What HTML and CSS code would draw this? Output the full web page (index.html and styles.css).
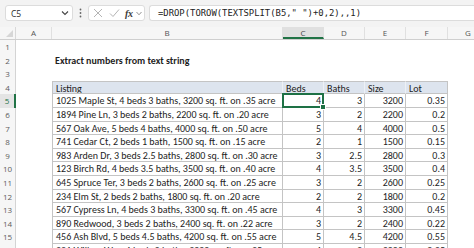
FILE: index.html
```html
<!DOCTYPE html>
<html>
<head>
<meta charset="utf-8">
<link rel="stylesheet" href="styles.css">
</head>
<body>
<div class="app">
  <div class="fbar">
    <div class="namebox">
      <span class="nb-text">C5</span>
      <svg class="chev" width="8" height="6" viewBox="0 0 8 6"><polyline points="1,1.5 4,4.5 7,1.5" fill="none" stroke="#444" stroke-width="1.1"/></svg>
    </div>
    <div class="vdots">
      <svg width="3" height="10" viewBox="0 0 3 10"><circle cx="1.5" cy="1.5" r="0.9" fill="#666"/><circle cx="1.5" cy="5" r="0.9" fill="#666"/><circle cx="1.5" cy="8.5" r="0.9" fill="#666"/></svg>
    </div>
    <div class="fxbox">
      <svg class="ico-x" width="10" height="10" viewBox="0 0 10 10"><path d="M1 1 L9 9 M9 1 L1 9" stroke="#b4b4b4" stroke-width="1" fill="none"/></svg>
      <svg class="ico-ok" width="11" height="10" viewBox="0 0 11 10"><polyline points="1,5.5 4,8.5 10,1.5" stroke="#b4b4b4" stroke-width="1" fill="none"/></svg>
      <span class="fx">fx</span>
      <svg class="chev2" width="6" height="5" viewBox="0 0 6 5"><polyline points="0.5,1 3,3.8 5.5,1" fill="none" stroke="#888" stroke-width="0.9"/></svg>
    </div>
    <div class="formula">=DROP(TOROW(TEXTSPLIT(B5," ")+0,2),,1)</div>
  </div>

  <div class="sheet">
    <div class="row colhdr">
      <div class="corner"><svg width="7" height="7" viewBox="0 0 7 7"><polygon points="7,0 7,7 0,7" fill="#d6d6d6"/></svg></div>
      <div class="ch">A</div>
      <div class="ch">B</div>
      <div class="ch ch-sel">C</div>
      <div class="ch">D</div>
      <div class="ch">E</div>
      <div class="ch">F</div>
      <div class="ch">G</div>
    </div>

    <div class="row"><div class="rh">1</div><div></div><div></div><div></div><div></div><div></div><div></div><div></div></div>
    <div class="row"><div class="rh">2</div><div></div><div class="title">Extract numbers from text string</div><div></div><div></div><div></div><div></div><div></div></div>
    <div class="row"><div class="rh">3</div><div></div><div></div><div></div><div></div><div></div><div></div><div></div></div>

    <div class="row"><div class="rh">4</div><div></div>
      <div class="t th first">Listing</div><div class="t th">Beds</div><div class="t th">Baths</div><div class="t th">Size</div><div class="t th">Lot</div><div></div></div>

    <div class="row"><div class="rh rh-sel">5</div><div></div>
      <div class="t first">1025 Maple St, 4 beds 3 baths, 3200 sq. ft. on .35 acre</div><div class="t num sel">4</div><div class="t num">3</div><div class="t num">3200</div><div class="t num">0.35</div><div></div></div>
    <div class="row"><div class="rh">6</div><div></div>
      <div class="t first">1894 Pine Ln, 3 beds 2 baths, 2200 sq. ft. on .20 acre</div><div class="t num">3</div><div class="t num">2</div><div class="t num">2200</div><div class="t num">0.2</div><div></div></div>
    <div class="row"><div class="rh">7</div><div></div>
      <div class="t first">567 Oak Ave, 5 beds 4 baths, 4000 sq. ft. on .50 acre</div><div class="t num">5</div><div class="t num">4</div><div class="t num">4000</div><div class="t num">0.5</div><div></div></div>
    <div class="row"><div class="rh">8</div><div></div>
      <div class="t first">741 Cedar Ct, 2 beds 1 bath, 1500 sq. ft. on .15 acre</div><div class="t num">2</div><div class="t num">1</div><div class="t num">1500</div><div class="t num">0.15</div><div></div></div>
    <div class="row"><div class="rh">9</div><div></div>
      <div class="t first">983 Arden Dr, 3 beds 2.5 baths, 2800 sq. ft. on .30 acre</div><div class="t num">3</div><div class="t num">2.5</div><div class="t num">2800</div><div class="t num">0.3</div><div></div></div>
    <div class="row"><div class="rh">10</div><div></div>
      <div class="t first">123 Birch Rd, 4 beds 3.5 baths, 3500 sq. ft. on .40 acre</div><div class="t num">4</div><div class="t num">3.5</div><div class="t num">3500</div><div class="t num">0.4</div><div></div></div>
    <div class="row"><div class="rh">11</div><div></div>
      <div class="t first">645 Spruce Ter, 3 beds 2 baths, 2600 sq. ft. on .25 acre</div><div class="t num">3</div><div class="t num">2</div><div class="t num">2600</div><div class="t num">0.25</div><div></div></div>
    <div class="row"><div class="rh">12</div><div></div>
      <div class="t first">234 Elm St, 2 beds 2 baths, 1800 sq. ft. on .20 acre</div><div class="t num">2</div><div class="t num">2</div><div class="t num">1800</div><div class="t num">0.2</div><div></div></div>
    <div class="row"><div class="rh">13</div><div></div>
      <div class="t first">567 Cypress Ln, 4 beds 3 baths, 3300 sq. ft. on .45 acre</div><div class="t num">4</div><div class="t num">3</div><div class="t num">3300</div><div class="t num">0.45</div><div></div></div>
    <div class="row"><div class="rh">14</div><div></div>
      <div class="t first">890 Redwood, 3 beds 2 baths, 2400 sq. ft. on .22 acre</div><div class="t num">3</div><div class="t num">2</div><div class="t num">2400</div><div class="t num">0.22</div><div></div></div>
    <div class="row"><div class="rh">15</div><div></div>
      <div class="t first">456 Ash Blvd, 5 beds 4.5 baths, 4200 sq. ft. on .55 acre</div><div class="t num">5</div><div class="t num">4.5</div><div class="t num">4200</div><div class="t num">0.55</div><div></div></div>
    <div class="row"><div class="rh">16</div><div></div>
      <div class="t first">321 Willow Way, 4 beds 3 baths, 3000 sq. ft. on .35 acre</div><div class="t num">4</div><div class="t num">3</div><div class="t num">3000</div><div class="t num">0.35</div><div></div></div>
  </div>
</div>
</body>
</html>
```
FILE: styles.css
```css
html, body {
  margin: 0;
  padding: 0;
  background: #ffffff;
  overflow: hidden;
}

.app {
  width: 474px;
  height: 248px;
  overflow: hidden;
  font-family: Carlito, Calibri, Lato, sans-serif;
  color: #1f1f1f;
}

/* ---------- formula bar ---------- */
.fbar {
  height: 27px;
  box-sizing: border-box;
  background: #f3f3f3;
  display: flex;
  align-items: flex-start;
  padding: 5px 0 0 5px;
}

.namebox {
  width: 68px;
  height: 16px;
  box-sizing: border-box;
  background: #fff;
  border: 1px solid #dcdcdc;
  border-radius: 3px;
  display: flex;
  align-items: center;
  justify-content: space-between;
  padding: 0 3px 0 5px;
}

.nb-text {
  font-family: "Open Sans", Lato, sans-serif;
  font-size: 8.5px;
  color: #2a2a2a;
}

.vdots {
  width: 15px;
  height: 16px;
  display: flex;
  align-items: center;
  justify-content: center;
}

.fxbox {
  width: 57px;
  height: 16px;
  box-sizing: border-box;
  background: #fff;
  border: 1px solid #dcdcdc;
  border-radius: 3px;
  display: flex;
  align-items: center;
  padding: 0 2px 0 4px;
  gap: 0;
}

.ico-x { margin-right: 6px; }
.ico-ok { margin-right: 5px; }

.fx {
  font-family: "Liberation Serif", serif;
  font-style: italic;
  font-weight: bold;
  font-size: 10px;
  color: #3a3a3a;
  margin-right: 3px;
  letter-spacing: -0.3px;
}

.formula {
  margin-left: 4px;
  flex: 1;
  height: 16px;
  box-sizing: border-box;
  background: #fff;
  border: 1px solid #dcdcdc;
  border-right: none;
  border-radius: 3px 0 0 3px;
  padding-left: 8px;
  font-family: "DejaVu Sans Mono", monospace;
  font-size: 8.9px;
  line-height: 14px;
  color: #222;
  white-space: nowrap;
}

/* ---------- sheet ---------- */
.sheet {
  display: flex;
  flex-direction: column;
}

.row {
  display: grid;
  grid-template-columns: 16px 36px 231px 41px 41px 41px 42px 41px;
  height: 13.6px;
  font-size: 10px;
  line-height: 13px;
}

.row > div {
  box-sizing: border-box;
  white-space: nowrap;
  overflow: hidden;
}

.colhdr {
  height: 13px;
  background: #f6f6f6;
  border-bottom: 1px solid #cfcfcf;
  box-sizing: border-box;
}

.corner {
  display: flex;
  align-items: flex-end;
  justify-content: flex-end;
  padding: 0 2px 2px 0;
  border-right: 1px solid #d8d8d8;
}

.ch {
  text-align: center;
  font-family: "Open Sans", Lato, sans-serif;
  font-size: 8px;
  line-height: 12px;
  color: #555;
  border-right: 1px solid #e0e0e0;
}

.ch-sel {
  background: #e0e0e0;
  border-bottom: 2px solid #217346;
  color: #444;
}

.rh {
  background: #f6f6f6;
  border-right: 1px solid #d4d4d4;
  text-align: center;
  font-family: "Open Sans", Lato, sans-serif;
  font-size: 8px;
  line-height: 13.6px;
  color: #5c5c5c;
}

.rh-sel {
  background: #e4e4e4;
  border-right: 2px solid #217346;
  color: #217346;
}

.title {
  font-weight: bold;
  padding-left: 3px;
  font-size: 10px;
  overflow: visible !important;
}

.t {
  border-right: 1px solid #c4c4c4;
  border-bottom: 1px solid #c4c4c4;
  padding: 0 3px;
  color: #1d1d1d;
}

.t.first {
  border-left: 1px solid #c4c4c4;
}

.th {
  background: #dde4ee;
  border-top: 1px solid #c4c4c4;
  border-right-color: #eef1f5;
}

.th:last-child, .th:nth-child(7) {
  border-right-color: #c4c4c4;
}

.num {
  text-align: right;
  padding-right: 2px;
}

.sel {
  position: relative;
  overflow: visible !important;
}

.sel::after {
  content: "";
  position: absolute;
  left: -1px;
  top: -1px;
  right: -1px;
  bottom: -1px;
  border: 2px solid #1e7145;
  pointer-events: none;
}

.sel::before {
  content: "";
  position: absolute;
  right: -3px;
  bottom: -3px;
  width: 4px;
  height: 4px;
  background: #1e7145;
  border: 1px solid #fff;
  z-index: 2;
}
```
